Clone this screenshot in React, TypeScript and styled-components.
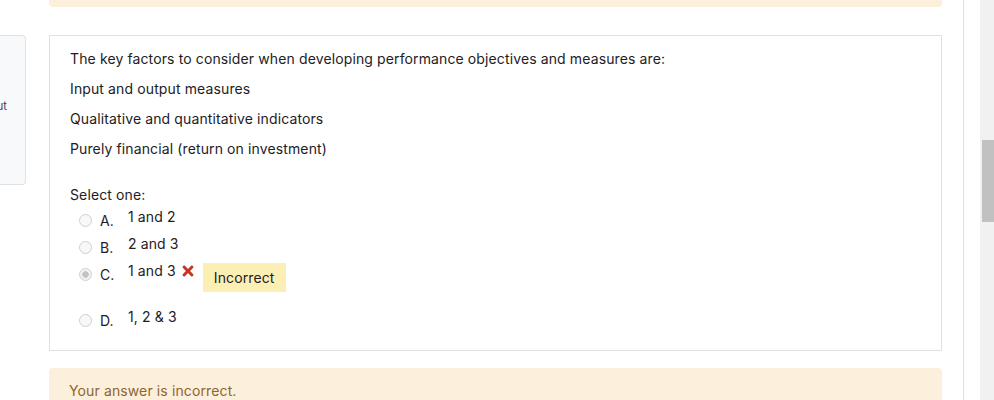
import React from "react";
import styled, {createGlobalStyle} from "styled-components";
import {FaTimes} from "react-icons/fa";

const GlobalStyle = createGlobalStyle({
  "html, body": {
    margin: 0,
    padding: 0,
    backgroundColor: "#FFF",
    overflow: "hidden",
  },
  body: {
    fontFamily: "Inter, 'Liberation Sans', sans-serif",
    fontSize: 14,
    letterSpacing: "0.12px",
    color: "#1d2125",
  },
});

const Page = styled.div({
  display: "grid",
  gridTemplateColumns: "26px 916px 1fr",
  width: 994,
  height: 400,
  overflow: "hidden",
});

const SideColumn = styled.div({
  paddingTop: 35,
});

const InfoBox = styled.div({
  height: 150,
  boxSizing: "border-box",
  backgroundColor: "#f8f9fa",
  border: "1px solid #dee2e6",
  borderLeft: "none",
  borderRadius: "0 4px 4px 0",
  overflow: "hidden",
  display: "flex",
  justifyContent: "flex-end",
  paddingTop: 63,
  fontSize: 11,
  color: "#3a3a5c",
});

const InfoText = styled.span({
  whiteSpace: "nowrap",
  paddingRight: 18,
});

const MainColumn = styled.div({
  display: "flex",
  flexDirection: "column",
  marginLeft: 23,
});

const Banner = styled.div<{$top?: boolean}>(({$top}) => ({
  backgroundColor: "#fcefdc",
  color: "#8e662e",
  borderRadius: $top ? "0 0 4px 4px" : "4px 4px 0 0",
  padding: $top ? 0 : "12px 20px",
  height: $top ? 7 : "auto",
  lineHeight: "21px",
}));

const QuestionBox = styled.div({
  margin: "28px 0 17px",
  border: "1px solid #dee2e6",
  height: 316,
  boxSizing: "border-box",
  padding: "12px 20px 0",
});

const Para = styled.p({
  margin: "0 0 9px",
  lineHeight: "21px",
});

const Prompt = styled.div({
  marginTop: 25,
  lineHeight: "21px",
});

const Answers = styled.div({
  paddingLeft: 9,
  paddingTop: 1,
});

const Option = styled.div<{$tall?: boolean}>(({$tall}) => ({
  display: "flex",
  alignItems: "flex-start",
  height: $tall ? 46 : 27,
}));

const Radio = styled.span<{$checked?: boolean}>(({$checked}) => ({
  width: 13,
  height: 13,
  boxSizing: "border-box",
  borderRadius: "50%",
  border: "1px solid #cfcfcf",
  background: $checked
    ? "radial-gradient(circle, #c4c4c4 0 3px, #f2f2f2 3.5px)"
    : "#f8f8f8",
  marginTop: 8,
  marginRight: 8,
  flexShrink: 0,
}));

const Letter = styled.span({
  width: 28,
  lineHeight: "27px",
  paddingTop: 1,
});

const AnswerText = styled.span({
  lineHeight: "21px",
});

const Cross = styled(FaTimes)({
  color: "#ca3120",
  fontSize: 16,
  marginLeft: 4,
  marginTop: 3,
});

const Feedback = styled.span({
  marginLeft: 7,
  marginTop: 3,
  height: 29,
  lineHeight: "29px",
  padding: "0 11px",
  backgroundColor: "#fcefb4",
});

const SideWrap = styled.div({
  display: "flex",
  justifyContent: "space-between",
  paddingLeft: 21,
});

const Divider = styled.div({
  borderLeft: "1px solid #dee2e6",
});

const Track = styled.div({
  width: 14,
  boxSizing: "border-box",
  backgroundColor: "#f1f1f1",
  paddingTop: 140,
  paddingLeft: 2,
});

const Thumb = styled.div({
  height: 82,
  backgroundColor: "#c1c1c1",
});

const options = [
  {letter: "A.", text: "1 and 2"},
  {letter: "B.", text: "2 and 3"},
  {letter: "C.", text: "1 and 3", chosen: true},
  {letter: "D.", text: "1, 2 & 3"},
];

export default function App() {
  return (
    <>
      <GlobalStyle />
      <Page>
        <SideColumn>
          <InfoBox>
            <InfoText>ut</InfoText>
          </InfoBox>
        </SideColumn>
        <MainColumn>
          <Banner $top />
          <QuestionBox>
            <Para>The key factors to consider when developing performance objectives and measures are:</Para>
            <Para>Input and output measures</Para>
            <Para>Qualitative and quantitative indicators</Para>
            <Para>Purely financial (return on investment)</Para>
            <Prompt>Select one:</Prompt>
            <Answers>
              {options.map((o) => (
                <Option key={o.letter} $tall={o.chosen}>
                  <Radio $checked={o.chosen} />
                  <Letter>{o.letter}</Letter>
                  <AnswerText>{o.text}</AnswerText>
                  {o.chosen && (
                    <>
                      <Cross />
                      <Feedback>Incorrect</Feedback>
                    </>
                  )}
                </Option>
              ))}
            </Answers>
          </QuestionBox>
          <Banner>Your answer is incorrect.</Banner>
        </MainColumn>
        <SideWrap>
          <Divider />
          <Track>
            <Thumb />
          </Track>
        </SideWrap>
      </Page>
    </>
  );
}
